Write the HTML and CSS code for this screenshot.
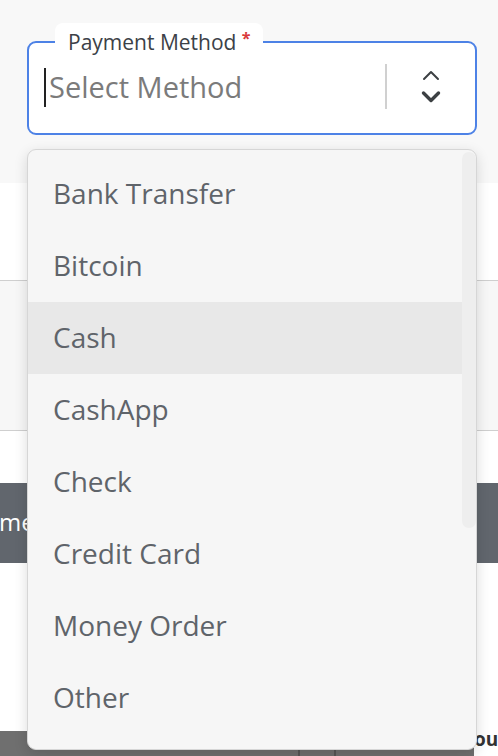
FILE: index.html
```html
<!DOCTYPE html>
<html lang="en">
<head>
    <meta charset="UTF-8">
    <meta name="viewport" content="width=device-width, initial-scale=1.0">
    <title>Payment Method</title>
    <link rel="stylesheet" href="styles.css">
</head>
<body>
    <div class="page">
        <div class="top">
            <div class="field">
                <span class="legend">Payment Method <b>*</b></span>
                <div class="control">
                    <span class="caret"></span>
                    <span class="placeholder">Select Method</span>
                    <span class="sep"></span>
                    <span class="arrows">
                        <svg width="22" height="40" viewBox="0 0 22 40">
                            <polyline points="4,12 11,5 18,12" fill="none" stroke="#3c4043" stroke-width="2" stroke-linecap="round" stroke-linejoin="round"/>
                            <polyline points="3.5,26 11,33.5 18.5,26" fill="none" stroke="#3c4043" stroke-width="3.4" stroke-linecap="round" stroke-linejoin="round"/>
                        </svg>
                    </span>
                </div>
            </div>
        </div>
        <div class="band white"></div>
        <div class="band grey"></div>
        <div class="band gap"></div>
        <div class="bar"><span>me</span></div>
        <div class="band tall"></div>
        <div class="foot">
            <div class="foot-grey"><span class="cell"></span><span class="cell"></span></div>
            <div class="foot-white">ou</div>
        </div>

        <div class="menu">
            <ul class="list">
                <li>Bank Transfer</li>
                <li>Bitcoin</li>
                <li class="active">Cash</li>
                <li>CashApp</li>
                <li>Check</li>
                <li>Credit Card</li>
                <li>Money Order</li>
                <li>Other</li>
            </ul>
            <span class="thumb"></span>
        </div>
    </div>
</body>
</html>
```

FILE: styles.css
```css
body{
    margin: 0;
    padding: 0;
    background: #fff;
    font-family: "Open Sans", "Liberation Sans", sans-serif;
}
.page{
    position: relative;
    width: 498px;
    height: 756px;
    overflow: hidden;
}
.top{
    height: 183px;
    background: #f8f8f8;
    padding-top: 41px;
    box-sizing: border-box;
}
.field{
    position: relative;
    margin-left: 27px;
    width: 450px;
}
.legend{
    position: absolute;
    top: -18px;
    left: 28px;
    background: #fff;
    border-radius: 8px;
    padding: 2px 12px 0 13px;
    height: 30px;
    box-sizing: border-box;
    font-size: 21px;
    color: #3c4147;
    line-height: 26px;
    white-space: nowrap;
}
.legend b{
    color: #d9393b;
    font-size: 16px;
    vertical-align: 6px;
}
.control{
    display: flex;
    align-items: center;
    height: 94px;
    box-sizing: border-box;
    border: 2px solid #4d82e6;
    border-radius: 9px;
    background: #fff;
    padding-left: 15px;
}
.caret{
    width: 2px;
    height: 39px;
    background: #222;
    margin-top: -2px;
}
.placeholder{
    flex: 1;
    font-size: 29px;
    color: #7b7b7b;
    margin-left: 3px;
    margin-top: -4px;
    white-space: nowrap;
}
.sep{
    width: 2px;
    height: 45px;
    background: #d0d0d0;
    margin-top: -4px;
}
.arrows{
    width: 88px;
    display: flex;
    justify-content: center;
    margin-top: -3px;
}
.band{
    box-sizing: border-box;
}
.white{
    height: 97px;
    background: #fff;
}
.grey{
    height: 151px;
    background: #f7f7f7;
    border-top: 1px solid #cfcfcf;
    border-bottom: 1px solid #cfcfcf;
}
.gap{
    height: 52px;
}
.bar{
    height: 80px;
    background: #61666d;
    color: #fff;
    font-size: 24px;
    display: flex;
    align-items: center;
}
.bar span{
    margin-left: -1px;
    margin-top: -4px;
}
.tall{
    height: 168px;
}
.foot{
    display: flex;
    height: 25px;
}
.foot-grey{
    flex: 1;
    background: #6f6f6f;
    display: flex;
    padding-left: 298px;
}
.cell{
    width: 34px;
    border-left: 2px solid #555;
}
.foot-white{
    width: 24px;
    background: #fff;
    color: #333;
    font-size: 19px;
    font-weight: bold;
    line-height: 17px;
    white-space: nowrap;
}
.menu{
    position: absolute;
    top: 149px;
    left: 27px;
    width: 450px;
    height: 601px;
    box-sizing: border-box;
    border: 1px solid #d6d6d6;
    border-radius: 9px;
    background: #f6f6f6;
    box-shadow: 0 4px 14px rgba(0, 0, 0, 0.14);
}
.list{
    list-style: none;
    margin: 0;
    padding: 8px 14px 0 0;
}
.list li{
    height: 72px;
    line-height: 70px;
    padding-left: 25px;
    font-size: 28px;
    color: #5f646a;
    white-space: nowrap;
}
.list li.active{
    background: #e8e8e8;
}
.thumb{
    position: absolute;
    top: 2px;
    right: 0;
    width: 14px;
    height: 376px;
    background: #eeeeee;
    border-radius: 7px;
}
```
